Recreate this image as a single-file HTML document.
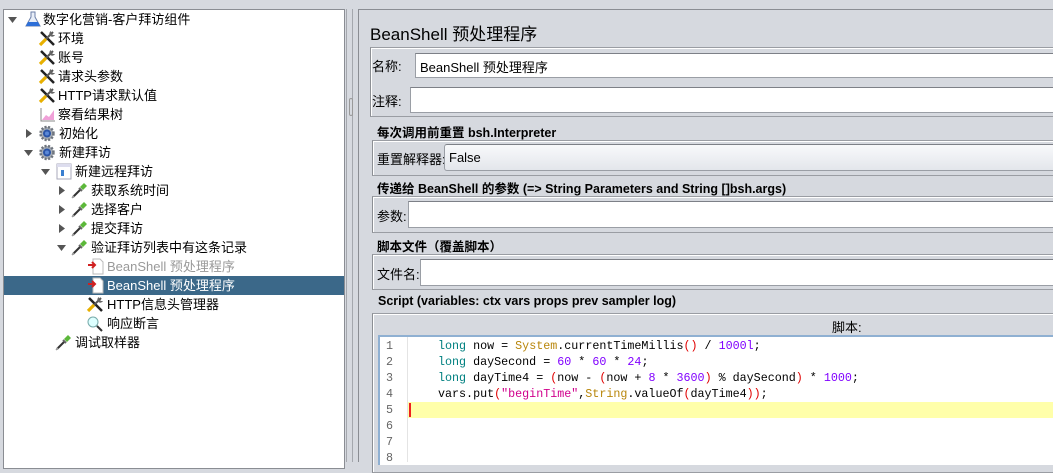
<!DOCTYPE html>
<html><head><meta charset="utf-8"><style>
*{margin:0;padding:0;box-sizing:border-box}
body{width:1053px;height:462px;overflow:hidden;background:#d6d9df;font-family:"Liberation Sans","Noto Sans CJK SC",sans-serif;font-size:13px;color:#000;position:relative}
.a{position:absolute}
#tree{left:3px;top:9px;width:342px;height:460px;background:#fff;border:1px solid #8a8d93}
.r{position:absolute;height:19px;line-height:19px;white-space:nowrap;font-size:13px}
.tw{position:absolute;top:5px;width:9px;height:9px}
.ic{position:absolute;top:1px;width:18px;height:17px}
.inp{position:absolute;background:#fff;border:1px solid #9a9ea5;border-top-color:#7d8087}
.grp{position:absolute;border:1px solid #9a9da3;border-left-color:#8c8f94;box-shadow:inset 1px 1px 0 #fff}
.b{font-weight:bold;position:absolute;font-size:12.5px}
.lbl{position:absolute;font-size:13px}
.code{position:absolute;font-family:"Liberation Mono",monospace;font-size:11.7px;line-height:16px;white-space:pre}
.k{color:#008080}.c{color:#b8860b}.n{color:#8000ff}.p{color:#e00000}.s{color:#d0008c}
</style></head><body>
<svg width="0" height="0" style="position:absolute">
<defs>
<symbol id="wr" viewBox="0 0 18 17"><path d="M3 2l13 13" stroke="#222" stroke-width="2.5"/><path d="M15 2L7 10" stroke="#555" stroke-width="2"/><path d="M13 1a3 3 0 1 0 4 4l-2-0-2-2z" fill="#666"/><path d="M8 9L2 15" stroke="#e8b000" stroke-width="3.2"/></symbol>
<symbol id="pp" viewBox="0 0 18 17"><path d="M3 15l8-8" stroke="#333" stroke-width="2"/><path d="M2 16l2-2" stroke="#999" stroke-width="1.5"/><path d="M10 5l3 3 4-4-3-3z" fill="#5cb83a"/><path d="M9 6l3 3" stroke="#666" stroke-width="2"/></symbol>
<symbol id="td" viewBox="0 0 9 9"><path d="M0 2h9L4.5 8z" fill="#555"/></symbol>
<symbol id="tr" viewBox="0 0 9 9"><path d="M2 0v9l6-4.5z" fill="#555"/></symbol>
<symbol id="gr" viewBox="0 0 18 17"><circle cx="9" cy="8.5" r="6.5" fill="#a7adb5" stroke="#6d737c" stroke-dasharray="2 1.5" stroke-width="2.5"/><circle cx="9" cy="8.5" r="4" fill="#2b55a8"/><circle cx="9" cy="8.5" r="2" fill="#5a88d8"/></symbol>
<symbol id="bs" viewBox="0 0 18 17"><path d="M6 1h7l3 3v12H6z" fill="#fff" stroke="#bbb"/><path d="M1 7h7M5 4l3 3-3 3" stroke="#d02020" stroke-width="2" fill="none"/></symbol>
</defs></svg>
<div class="a" style="left:0;top:0;width:1053px;height:8px;background:#d6d9df"></div>
<div id="tree" class="a">
 <div class="r" style="top:0;left:0;width:340px"><svg class="tw" style="left:4px"><use href="#td"/></svg>
 <svg class="ic" style="left:20px" viewBox="0 0 18 17"><path d="M7 1h4v5l5 9H2l5-9z" fill="#e8eef8" stroke="#6b7fa8"/><path d="M4 11h10l2 4H2z" fill="#2d6fd8"/></svg><span style="position:absolute;left:39px">数字化营销-客户拜访组件</span></div>
 <div class="r" style="top:19px;left:34px"><svg class="ic" style="left:0"><use href="#wr"/></svg><span style="position:absolute;left:20px">环境</span></div>
 <div class="r" style="top:38px;left:34px"><svg class="ic" style="left:0"><use href="#wr"/></svg><span style="position:absolute;left:20px">账号</span></div>
 <div class="r" style="top:57px;left:34px"><svg class="ic" style="left:0"><use href="#wr"/></svg><span style="position:absolute;left:20px">请求头参数</span></div>
 <div class="r" style="top:76px;left:34px"><svg class="ic" style="left:0"><use href="#wr"/></svg><span style="position:absolute;left:20px">HTTP请求默认值</span></div>
 <div class="r" style="top:95px;left:34px"><svg class="ic" style="left:2px;top:2px;width:16px;height:15px" viewBox="0 0 16 15"><path d="M1 1v13h14" stroke="#888" fill="none"/><path d="M2 13l4-5 3 2 5-7v10z" fill="#f0a0d8"/></svg><span style="position:absolute;left:20px">察看结果树</span></div>
 <div class="r" style="top:114px;left:0"><svg class="tw" style="left:20px"><use href="#tr"/></svg><svg class="ic" style="left:34px"><use href="#gr"/></svg><span style="position:absolute;left:55px">初始化</span></div>
 <div class="r" style="top:133px;left:0"><svg class="tw" style="left:20px"><use href="#td"/></svg><svg class="ic" style="left:34px"><use href="#gr"/></svg><span style="position:absolute;left:55px">新建拜访</span></div>
 <div class="r" style="top:152px;left:0"><svg class="tw" style="left:37px"><use href="#td"/></svg><svg class="ic" style="left:51px" viewBox="0 0 18 17"><rect x="2" y="1" width="14" height="15" fill="#fff" stroke="#aab"/><rect x="2" y="1" width="14" height="3" fill="#dde"/><rect x="6" y="7" width="3" height="6" fill="#3a7fd0"/></svg><span style="position:absolute;left:71px">新建远程拜访</span></div>
 <div class="r" style="top:171px;left:0"><svg class="tw" style="left:53px"><use href="#tr"/></svg><svg class="ic" style="left:66px"><use href="#pp"/></svg><span style="position:absolute;left:87px">获取系统时间</span></div>
 <div class="r" style="top:190px;left:0"><svg class="tw" style="left:53px"><use href="#tr"/></svg><svg class="ic" style="left:66px"><use href="#pp"/></svg><span style="position:absolute;left:87px">选择客户</span></div>
 <div class="r" style="top:209px;left:0"><svg class="tw" style="left:53px"><use href="#tr"/></svg><svg class="ic" style="left:66px"><use href="#pp"/></svg><span style="position:absolute;left:87px">提交拜访</span></div>
 <div class="r" style="top:228px;left:0"><svg class="tw" style="left:53px"><use href="#td"/></svg><svg class="ic" style="left:66px"><use href="#pp"/></svg><span style="position:absolute;left:87px">验证拜访列表中有这条记录</span></div>
 <div class="r" style="top:247px;left:0"><svg class="ic" style="left:83px"><use href="#bs"/></svg><span style="position:absolute;left:103px;color:#999">BeanShell 预处理程序</span></div>
 <div class="r" style="top:266px;left:0;width:340px;background:#3b6889;color:#fff"><svg class="ic" style="left:83px"><use href="#bs"/></svg><span style="position:absolute;left:103px">BeanShell 预处理程序</span></div>
 <div class="r" style="top:285px;left:82px"><svg class="ic" style="left:0"><use href="#wr"/></svg><span style="position:absolute;left:21px">HTTP信息头管理器</span></div>
 <div class="r" style="top:304px;left:0"><svg class="ic" style="left:82px" viewBox="0 0 18 17"><circle cx="7" cy="7" r="5" fill="#dff" stroke="#7aa"/><path d="M11 11l5 5" stroke="#333" stroke-width="2"/></svg><span style="position:absolute;left:103px">响应断言</span></div>
 <div class="r" style="top:323px;left:0"><svg class="ic" style="left:50px"><use href="#pp"/></svg><span style="position:absolute;left:71px">调试取样器</span></div>
</div>
<div class="a" style="left:346px;top:9px;width:1px;height:453px;background:#a4a7ad"></div>
<div class="a" style="left:352px;top:9px;width:1px;height:453px;background:#a4a7ad"></div>
<div class="a" style="left:358px;top:9px;width:1px;height:453px;background:#8a8d93"></div>
<div class="a" style="left:349px;top:98px;width:4px;height:18px;border:1px solid #999;border-radius:2px"></div>
<div class="a" style="left:359px;top:9px;width:694px;height:1px;background:#8a8d93"></div>

<div class="a" style="left:370px;top:20px;font-size:17px">BeanShell 预处理程序</div>
<div class="grp" style="left:370px;top:47px;width:690px;height:70px"></div>
<div class="lbl" style="left:372px;top:56px">名称:</div>
<div class="inp" style="left:415px;top:53px;width:640px;height:25px;padding:3px 4px;font-size:13px">BeanShell 预处理程序</div>
<div class="lbl" style="left:372px;top:91px">注释:</div>
<div class="inp" style="left:410px;top:87px;width:645px;height:26px"></div>

<div class="b" style="left:377px;top:122px">每次调用前重置 bsh.Interpreter</div>
<div class="grp" style="left:372px;top:140px;width:690px;height:36px"></div>
<div class="lbl" style="left:377px;top:149px">重置解释器:</div>
<div class="inp" style="left:444px;top:144px;width:620px;height:27px;border-radius:3px;background:linear-gradient(#f8f9fb,#e3e6eb);padding:5px 4px">False</div>

<div class="b" style="left:377px;top:178px">传递给 BeanShell 的参数 (=&gt; String Parameters and String []bsh.args)</div>
<div class="grp" style="left:372px;top:196px;width:690px;height:37px"></div>
<div class="lbl" style="left:377px;top:206px">参数:</div>
<div class="inp" style="left:408px;top:201px;width:650px;height:27px"></div>

<div class="b" style="left:377px;top:236px">脚本文件（覆盖脚本）</div>
<div class="grp" style="left:372px;top:254px;width:690px;height:36px"></div>
<div class="lbl" style="left:377px;top:264px">文件名:</div>
<div class="inp" style="left:420px;top:259px;width:640px;height:27px"></div>

<div class="b" style="left:378px;top:294px">Script (variables: ctx vars props prev sampler log)</div>
<div class="grp" style="left:372px;top:313px;width:690px;height:160px"></div>
<div class="lbl" style="left:832px;top:317px">脚本:</div>
<div class="a" style="left:378px;top:335px;width:680px;height:130px;background:#fff;border:2px solid #8fb0d2;border-right:none;border-bottom:none"></div>
<div class="a" style="left:407px;top:337px;width:1px;height:125px;background:#e4e4e4"></div>
<div class="a" style="left:408px;top:402px;width:645px;height:16px;background:#ffffaa"></div>
<div class="a" style="left:409px;top:403px;width:2px;height:14px;background:#ee2020"></div>
<div class="code" style="left:386px;top:338px;color:#666">1
2
3
4
5
6
7
8</div>
<div class="code" style="left:438px;top:338px"><span class="k">long</span> now = <span class="c">System</span>.currentTimeMillis<span class="p">()</span> / <span class="n">1000l</span>;
<span class="k">long</span> daySecond = <span class="n">60</span> * <span class="n">60</span> * <span class="n">24</span>;
<span class="k">long</span> dayTime4 = <span class="p">(</span>now - <span class="p">(</span>now + <span class="n">8</span> * <span class="n">3600</span><span class="p">)</span> % daySecond<span class="p">)</span> * <span class="n">1000</span>;
vars.put<span class="p">(</span><span class="s">"beginTime"</span>,<span class="c">String</span>.valueOf<span class="p">(</span>dayTime4<span class="p">))</span>;</div>
</body></html>
